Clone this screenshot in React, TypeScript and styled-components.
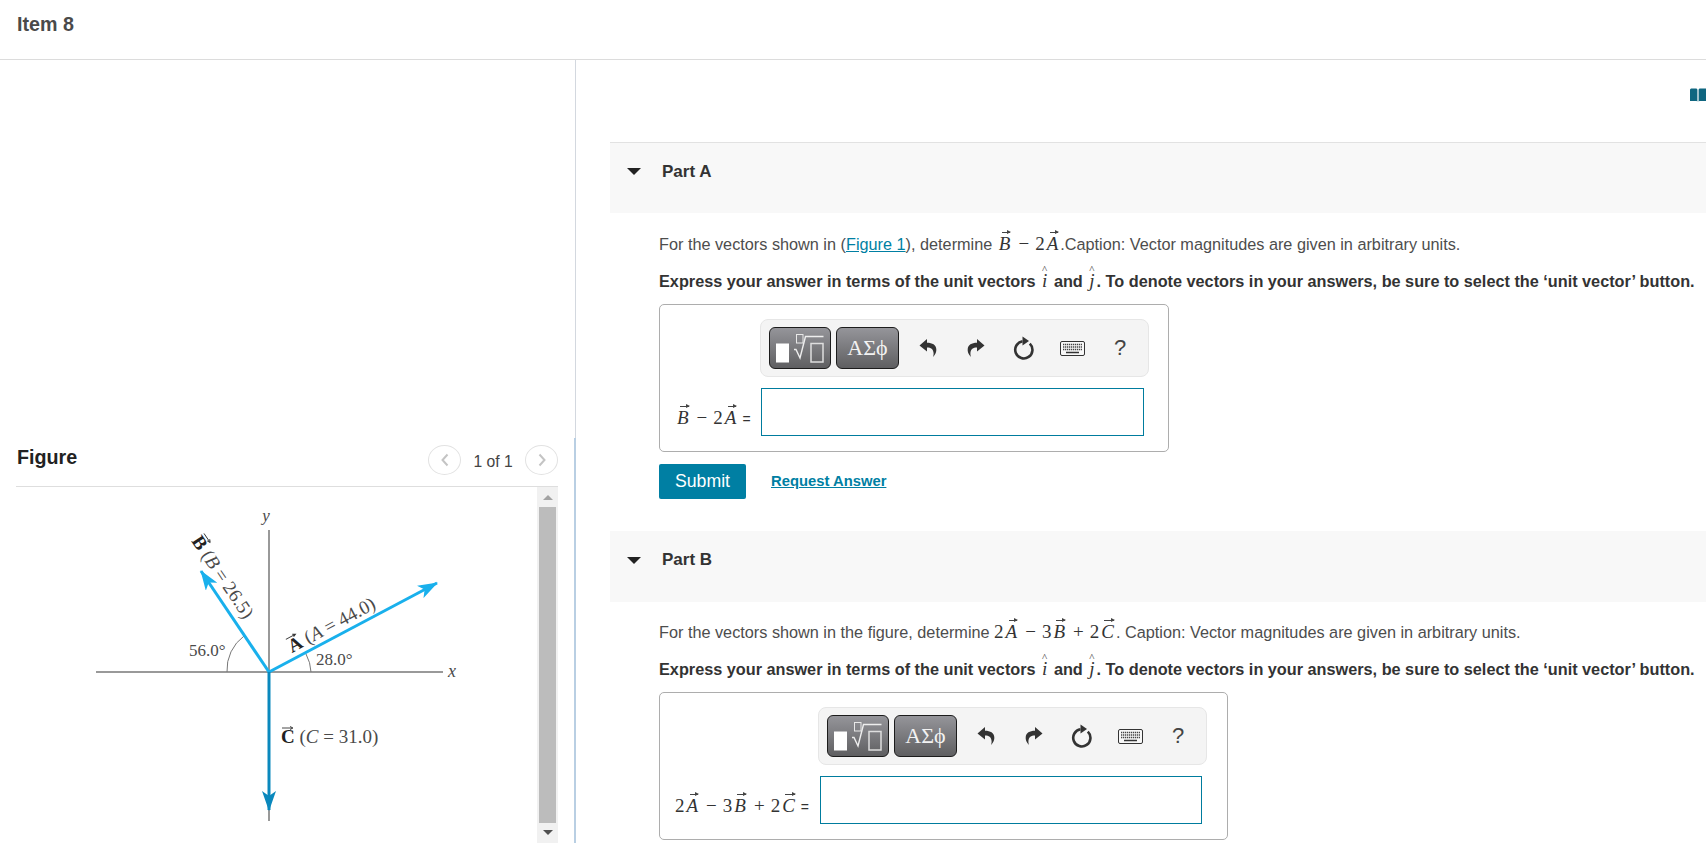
import React from "react";
import styled, { createGlobalStyle } from "styled-components";

const GlobalStyle = createGlobalStyle`
  html, body {
    margin: 0;
    padding: 0;
    background: #fff;
    overflow: hidden;
  }
  body {
    font-family: "Liberation Sans", Arial, sans-serif;
    color: #333;
  }
`;

const Page = styled.div`
  width: 1706px;
  height: 843px;
  overflow: hidden;
  display: flex;
  flex-direction: column;
`;

const Header = styled.header`
  box-sizing: border-box;
  height: 60px;
  flex: none;
  padding: 14px 17px 0;
  border-bottom: 1px solid #dcdcdc;
  font-size: 19.7px;
  line-height: 21px;
  font-weight: 700;
  color: #4a4a4a;
`;

const Columns = styled.div`
  flex: 1;
  min-height: 0;
  display: flex;
`;

const LeftPane = styled.aside`
  box-sizing: border-box;
  width: 574px;
  flex: none;
  padding: 377px 16px 0 16px;
  display: flex;
  flex-direction: column;
`;

const Divider = styled.div`
  width: 2px;
  flex: none;
  display: flex;
  flex-direction: column;
  &::before {
    content: "";
    height: 378px;
    width: 1px;
    margin-left: 1px;
    background: #d3d8df;
  }
  &::after {
    content: "";
    flex: 1;
    background: #b9cfe3;
  }
`;

const FigureBar = styled.div`
  box-sizing: border-box;
  height: 50px;
  flex: none;
  display: flex;
  align-items: center;
  border-bottom: 1px solid #dedede;
  padding-bottom: 3px;
`;

const FigureTitle = styled.h2`
  flex: 1;
  margin: 0 0 6px;
  padding-left: 1px;
  font-size: 19.7px;
  line-height: 21px;
  font-weight: 700;
  color: #222;
`;

const NavButton = styled.span`
  box-sizing: border-box;
  width: 33px;
  height: 30px;
  border: 1px solid #e2e2e2;
  border-radius: 50%;
  display: flex;
  align-items: center;
  justify-content: center;
`;

const NavLabel = styled.span`
  width: 64px;
  text-align: center;
  font-size: 15.7px;
  color: #444;
  position: relative;
  top: 2px;
`;

const FigureBody = styled.div`
  flex: 1;
  min-height: 0;
  display: flex;
`;

const FigureSvg = styled.svg`
  display: block;
  flex: 1;
  width: 521px;
  height: 356px;
`;

const ScrollBar = styled.div`
  width: 21px;
  flex: none;
  background: #f1f1f1;
  display: flex;
  flex-direction: column;
  align-items: center;
  justify-content: space-between;
`;

const ScrollArrow = styled.span<{ $up?: boolean }>`
  width: 0;
  height: 0;
  flex: none;
  margin: ${({ $up }) => ($up ? "8px 0 7px" : "7px 0 8px")};
  border-left: 5px solid transparent;
  border-right: 5px solid transparent;
  border-bottom: ${({ $up }) => ($up ? "5px solid #a3a3a3" : "none")};
  border-top: ${({ $up }) => ($up ? "none" : "5px solid #505050")};
`;

const ScrollThumb = styled.div`
  flex: 1;
  width: 17px;
  background: #bcbcbc;
`;

const RightPane = styled.main`
  flex: 1;
  min-width: 0;
  padding-left: 34px;
`;

const BookRow = styled.div`
  height: 82px;
  box-sizing: border-box;
  padding-top: 28px;
  display: flex;
  justify-content: flex-end;
`;

const PartHeader = styled.div<{ $top?: number }>`
  box-sizing: border-box;
  height: 71px;
  margin-top: ${({ $top }) => $top ?? 0}px;
  background: #f8f8f8;
  display: flex;
  align-items: center;
  padding: 0 0 13px 17px;
  gap: 21px;
  border-top: ${({ $top }) => ($top ? "none" : "1px solid #e2e2e2")};
`;

const Caret = styled.span`
  width: 0;
  height: 0;
  border-left: 7px solid transparent;
  border-right: 7px solid transparent;
  border-top: 7px solid #222;
`;

const PartTitle = styled.h3`
  margin: 0;
  font-size: 17px;
  font-weight: 700;
  color: #333;
`;

const PartBody = styled.section<{ $top: number }>`
  padding: ${({ $top }) => $top}px 0 0 49px;
`;

const Para = styled.p<{ $strong?: boolean }>`
  margin: 0 0 ${({ $strong }) => ($strong ? "10px" : "11px")};
  white-space: nowrap;
  height: 26px;
  line-height: 26px;
  font-size: 16.25px;
  font-weight: ${({ $strong }) => ($strong ? 700 : 400)};
  color: ${({ $strong }) => ($strong ? "#333" : "#4d4d4d")};
`;

const FigureLink = styled.a`
  color: #007fa3;
  text-decoration: underline;
`;

const Math = styled.span`
  font-family: "Liberation Serif", "Times New Roman", serif;
  font-size: 19px;
  font-weight: 400;
  color: #333;
  white-space: nowrap;
`;

const Op = styled.span`
  margin: 0 6px;
`;

const Vec = styled.i`
  position: relative;
  display: inline-block;
  line-height: 1;
  padding: 0 2px;
  &::before {
    content: "";
    position: absolute;
    left: 5px;
    right: 2px;
    top: -2px;
    height: 1px;
    background: #444;
  }
  &::after {
    content: "";
    position: absolute;
    right: 1px;
    top: -4px;
    border-left: 4px solid #444;
    border-top: 2.5px solid transparent;
    border-bottom: 2.5px solid transparent;
  }
`;

const Unit = styled.i`
  position: relative;
  display: inline-block;
  line-height: 1;
  padding: 0 2px;
  &::before {
    content: "^";
    position: absolute;
    left: 2px;
    top: -7px;
    font-style: normal;
    font-size: 11px;
  }
`;

const AnswerBox = styled.div<{ $width: number; $label: number }>`
  box-sizing: border-box;
  width: ${({ $width }) => $width}px;
  height: 148px;
  border: 1px solid #adadad;
  border-radius: 5px;
  padding: 14px 0 0 15px;
  display: grid;
  grid-template-columns: ${({ $label }) => $label}px 1fr;
  grid-template-rows: 58px 48px;
  row-gap: 11px;
`;

const Toolbar = styled.div<{ $shift: number }>`
  box-sizing: border-box;
  grid-column: 2;
  width: 389px;
  margin-left: ${({ $shift }) => $shift}px;
  background: #f4f4f4;
  border: 1px solid #e6e6e6;
  border-radius: 8px;
  display: flex;
  align-items: center;
  padding-left: 8px;
`;

const PaletteButton = styled.span<{ $width: number }>`
  box-sizing: border-box;
  width: ${({ $width }) => $width}px;
  height: 42px;
  margin-right: 5px;
  border: 1px solid #1c1c1c;
  border-radius: 6px;
  background: linear-gradient(#95959a, #5f5f61);
  color: #f2f2f2;
  font-family: "Liberation Serif", serif;
  font-size: 22px;
  display: flex;
  align-items: center;
  justify-content: center;
`;

const ToolIcon = styled.span`
  width: 48px;
  height: 42px;
  flex: none;
  display: flex;
  align-items: center;
  justify-content: center;
  color: #333;
`;

const HelpMark = styled.span`
  font-size: 22px;
  color: #444;
`;

const AnswerLabel = styled.label`
  display: flex;
  align-items: flex-end;
  padding-bottom: 7px;
  white-space: nowrap;
`;

const Equals = styled.span`
  font-size: 14px;
  margin-left: 4px;
  position: relative;
  top: -2px;
  color: #333;
`;

const AnswerInput = styled.input<{ $width: number }>`
  box-sizing: border-box;
  width: ${({ $width }) => $width}px;
  height: 48px;
  border: 1px solid #007c9e;
  border-radius: 0;
  outline: none;
  padding: 0;
  background: #fff;
`;

const Actions = styled.div`
  display: flex;
  align-items: center;
  margin-top: 12px;
  gap: 25px;
  height: 35px;
`;

const SubmitButton = styled.button`
  box-sizing: border-box;
  width: 87px;
  height: 35px;
  border: none;
  border-radius: 2px;
  background: #007fa3;
  color: #fff;
  font-family: "Liberation Sans", sans-serif;
  font-size: 17.7px;
  padding: 0;
`;

const RequestLink = styled.a`
  color: #007fa3;
  font-size: 14.8px;
  font-weight: 700;
  text-decoration: underline;
  position: relative;
  top: -1px;
`;

const NavChevron = ({ dir }: { dir: "l" | "r" }) => (
  <svg width="10" height="14" viewBox="0 0 10 14">
    <path
      d={dir === "l" ? "M7.5 1.5 2.5 7l5 5.5" : "M2.5 1.5 7.5 7l-5 5.5"}
      fill="none"
      stroke="#c4c4c4"
      strokeWidth="2"
    />
  </svg>
);

const BookIcon = () => (
  <svg width="16" height="14" viewBox="0 0 16 14">
    <path d="M0 1.5 1 .5h5.5L7.4 1.5V13.5L6.5 13H0Z" fill="#0f6680" />
    <path d="M8.6 1.5 9.5.5H16V13H9.5l-.9.5Z" fill="#0f6680" />
  </svg>
);

const TemplatesGlyph = () => (
  <svg width="48" height="29" viewBox="0 0 48 29">
    <rect x="0" y="9.500" width="13" height="19" fill="#fff" />
    <rect x="20.500" y=".5" width="6.500" height="8.500" fill="none" stroke="#e8e8e8" />
    <path d="M18 15.500h2l4 8.500 5.500-21.500H47.500" fill="none" stroke="#eee" strokeWidth="1.400" />
    <rect x="35" y="9.500" width="12" height="18.500" fill="none" stroke="#dedede" strokeWidth="1.500" />
  </svg>
);

const UndoIcon = ({ flip }: { flip?: boolean }) => (
  <svg width="18" height="20" viewBox="0 0 18 20" style={flip ? { transform: "scaleX(-1)" } : undefined}>
    <path
      d="M8 1 .5 7.500 8 13.500V9.500c4 0 6.200 1.700 6.600 5.600.1 1.300-.1 2.600-.6 3.900 2.600-2.500 3.600-5.300 3.300-8C16.900 7 13.500 4.800 8 4.800Z"
      fill="#333"
    />
  </svg>
);

const ResetIcon = () => (
  <svg width="22" height="24" viewBox="0 0 22 24">
    <path d="M16.800 7.600A8.600 8.600 0 1 1 9.500 5.300" fill="none" stroke="#333" strokeWidth="2.600" />
    <path d="M9.500 .5 16 5 9.500 9.500Z" fill="#333" />
  </svg>
);

const KeyboardIcon = () => (
  <svg width="25" height="15" viewBox="0 0 25 15">
    <rect x=".5" y=".5" width="24" height="14" rx="1.500" fill="#f8f8f8" stroke="#333" />
    <path
      d="M3 3.500h19M3 6h19M3 8.500h19"
      stroke="#444"
      strokeWidth="1.300"
      strokeDasharray="1.300 .7"
      fill="none"
    />
    <path d="M6 11.500h13" stroke="#333" strokeWidth="1.500" />
  </svg>
);

const Tools = ({ shift }: { shift: number }) => (
  <Toolbar $shift={shift}>
    <PaletteButton $width={62}>
      <TemplatesGlyph />
    </PaletteButton>
    <PaletteButton $width={63}>ΑΣϕ</PaletteButton>
    <ToolIcon>
      <UndoIcon />
    </ToolIcon>
    <ToolIcon>
      <UndoIcon flip />
    </ToolIcon>
    <ToolIcon>
      <ResetIcon />
    </ToolIcon>
    <ToolIcon>
      <KeyboardIcon />
    </ToolIcon>
    <ToolIcon>
      <HelpMark>?</HelpMark>
    </ToolIcon>
  </Toolbar>
);

const ExpressLine = () => (
  <Para $strong>
    Express your answer in terms of the unit vectors{" "}
    <Math>
      <Unit>i</Unit>
    </Math>{" "}
    and{" "}
    <Math>
      <Unit>j</Unit>
    </Math>
    . To denote vectors in your answers, be sure to select the ‘unit vector’ button.
  </Para>
);

const ExprAB = () => (
  <Math>
    <Vec>B</Vec>
    <Op>−</Op>2<Vec>A</Vec>
  </Math>
);

const ExprABC = () => (
  <Math>
    2<Vec>A</Vec>
    <Op>−</Op>3<Vec>B</Vec>
    <Op>+</Op>2<Vec>C</Vec>
  </Math>
);

const SmallArrow = ({ x, y }: { x: number; y: number }) => (
  <path d={`M${x} ${y}h10M${x + 8} ${y - 1.500}l3 1.500-3 1.500`} fill="none" stroke="#333" strokeWidth=".9" />
);

const VectorFigure = () => {
  const serif = "'Liberation Serif', serif";
  // viewBox origin sits at the panel corner, page (16, 487)
  return (
    <FigureSvg viewBox="0 0 521 356">
      <defs>
        <marker id="head" viewBox="0 0 20 14" refX="19" refY="7" markerWidth="20" markerHeight="14" markerUnits="userSpaceOnUse" orient="auto">
          <path d="M0 0 20 7 0 14 5 7Z" fill="context-stroke" />
        </marker>
      </defs>
      <path d="M80 185H427" stroke="#999" strokeWidth="2" />
      <path d="M253 43V334" stroke="#999" strokeWidth="2" />
      <path d="M211 185A42 42 0 0 1 228 149" fill="none" stroke="#777" />
      <path d="M295 185A42 42 0 0 0 290 167" fill="none" stroke="#777" />
      <path d="M253 185 421 96" stroke="#19b0ec" strokeWidth="3" markerEnd="url(#head)" />
      <path d="M253 185 185 84" stroke="#19b0ec" strokeWidth="3" markerEnd="url(#head)" />
      <path d="M253 185V323" stroke="#0a88bd" strokeWidth="3" markerEnd="url(#head)" />
      <g fontFamily={serif} fontSize="17" fill="#4a4a4a">
        <text x="250" y="34" textAnchor="middle" fontStyle="italic">y</text>
        <text x="432" y="190" fontStyle="italic" fontSize="18">x</text>
        <text x="173" y="169">56.0°</text>
        <text x="300" y="178">28.0°</text>
        <g fontSize="19">
          <g transform="translate(265 256)">
            <text>
              <tspan fontWeight="700" fill="#222">C</tspan> (<tspan fontStyle="italic">C</tspan> = 31.0)
            </text>
            <SmallArrow x={1} y={-15} />
          </g>
          <g transform="translate(276 166) rotate(-28)">
            <text>
              <tspan fontWeight="700" fill="#222">A</tspan> (<tspan fontStyle="italic">A</tspan> = 44.0)
            </text>
            <SmallArrow x={1} y={-15} />
          </g>
          <g transform="translate(175 54) rotate(56)">
            <text>
              <tspan fontWeight="700" fill="#222">B</tspan> (<tspan fontStyle="italic">B</tspan> = 26.5)
            </text>
            <SmallArrow x={1} y={-15} />
          </g>
        </g>
      </g>
    </FigureSvg>
  );
};

export default function App() {
  return (
    <Page>
      <GlobalStyle />
      <Header>Item 8</Header>
      <Columns>
        <LeftPane>
          <FigureBar>
            <FigureTitle>Figure</FigureTitle>
            <NavButton>
              <NavChevron dir="l" />
            </NavButton>
            <NavLabel>1 of 1</NavLabel>
            <NavButton>
              <NavChevron dir="r" />
            </NavButton>
          </FigureBar>
          <FigureBody>
            <VectorFigure />
            <ScrollBar>
              <ScrollArrow $up />
              <ScrollThumb />
              <ScrollArrow />
            </ScrollBar>
          </FigureBody>
        </LeftPane>
        <Divider />
        <RightPane>
          <BookRow>
            <BookIcon />
          </BookRow>
          <PartHeader>
            <Caret />
            <PartTitle>Part A</PartTitle>
          </PartHeader>
          <PartBody $top={18}>
            <Para>
              For the vectors shown in (<FigureLink>Figure 1</FigureLink>), determine <ExprAB />
              .Caption: Vector magnitudes are given in arbitrary units.
            </Para>
            <ExpressLine />
            <AnswerBox $width={510} $label={86}>
              <Tools shift={-1} />
              <AnswerLabel>
                <ExprAB />
                <Equals>=</Equals>
              </AnswerLabel>
              <AnswerInput $width={383} aria-label="answer A" />
            </AnswerBox>
            <Actions>
              <SubmitButton>Submit</SubmitButton>
              <RequestLink>Request Answer</RequestLink>
            </Actions>
          </PartBody>
          <PartHeader $top={32}>
            <Caret />
            <PartTitle>Part B</PartTitle>
          </PartHeader>
          <PartBody $top={17}>
            <Para>
              For the vectors shown in the figure, determine <ExprABC />. Caption: Vector magnitudes are given in
              arbitrary units.
            </Para>
            <ExpressLine />
            <AnswerBox $width={569} $label={145}>
              <Tools shift={-2} />
              <AnswerLabel>
                <ExprABC />
                <Equals>=</Equals>
              </AnswerLabel>
              <AnswerInput $width={382} aria-label="answer B" />
            </AnswerBox>
          </PartBody>
        </RightPane>
      </Columns>
    </Page>
  );
}
